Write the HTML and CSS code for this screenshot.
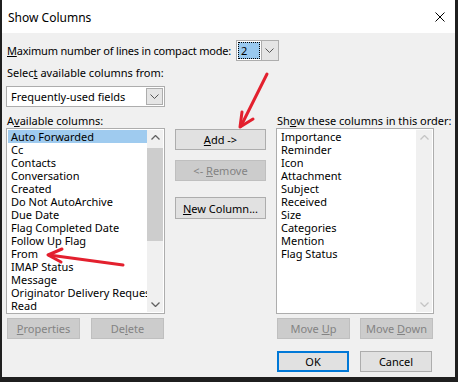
FILE: index.html
```html
<!DOCTYPE html>
<html lang="en">
<head>
  <meta charset="UTF-8">
  <title>Show Columns</title>
  <link rel="stylesheet" href="styles.css">
</head>
<body>
  <div class="dialog">
    <div class="titlebar">
      <span class="title">Show Columns</span>
      <svg class="close" width="10" height="10" viewBox="0 0 10 10">
        <path d="M0.5 0.5 L9.5 9.5 M9.5 0.5 L0.5 9.5" stroke="#000" stroke-width="1"/>
      </svg>
    </div>

    <div class="content">
      <div class="lines-row">
        <span class="tight"><u>M</u>aximum number of lines in compact mode:</span>
        <div class="small-combo">
          <span class="small-value">2</span>
          <span class="drop"><svg width="9" height="5" viewBox="0 0 9 5"><path d="M0.5 0.5 L4.5 4.5 L8.5 0.5" fill="none" stroke="#555"/></svg></span>
        </div>
      </div>

      <div class="label">Selec<u>t</u> available columns from:</div>
      <div class="combo">
        <span>Frequently-used fields</span>
        <span class="drop"><svg width="9" height="5" viewBox="0 0 9 5"><path d="M0.5 0.5 L4.5 4.5 L8.5 0.5" fill="none" stroke="#555"/></svg></span>
      </div>

      <div class="columns">
        <div class="label col-left">A<u>v</u>ailable columns:</div>
        <div class="label col-right">Sh<u>o</u>w these columns in this order:</div>

        <div class="listbox">
          <div class="items">
            <div class="item selected">Auto Forwarded</div>
            <div class="item">Cc</div>
            <div class="item">Contacts</div>
            <div class="item">Conversation</div>
            <div class="item">Created</div>
            <div class="item">Do Not AutoArchive</div>
            <div class="item">Due Date</div>
            <div class="item">Flag Completed Date</div>
            <div class="item">Follow Up Flag</div>
            <div class="item">From</div>
            <div class="item">IMAP Status</div>
            <div class="item">Message</div>
            <div class="item">Originator Delivery Requested</div>
            <div class="item">Read</div>
          </div>
          <div class="scrollbar">
            <svg class="arrow" width="9" height="5" viewBox="0 0 9 5"><path d="M0.5 4.5 L4.5 0.5 L8.5 4.5" fill="none" stroke="#606060" stroke-width="1.3"/></svg>
            <div class="track"><div class="thumb"></div></div>
            <svg class="arrow" width="9" height="5" viewBox="0 0 9 5"><path d="M0.5 0.5 L4.5 4.5 L8.5 0.5" fill="none" stroke="#606060" stroke-width="1.3"/></svg>
          </div>
        </div>

        <div class="middle">
          <button class="btn"><u>A</u>dd -&gt;</button>
          <button class="btn" disabled>&lt;- <u>R</u>emove</button>
          <button class="btn new-col"><u>N</u>ew Column...</button>
        </div>

        <div class="listbox">
          <div class="items">
            <div class="item">Importance</div>
            <div class="item">Reminder</div>
            <div class="item">Icon</div>
            <div class="item">Attachment</div>
            <div class="item">Subject</div>
            <div class="item">Received</div>
            <div class="item">Size</div>
            <div class="item">Categories</div>
            <div class="item">Mention</div>
            <div class="item">Flag Status</div>
          </div>
          <div class="scrollbar">
            <svg class="arrow" width="9" height="5" viewBox="0 0 9 5"><path d="M0.5 4.5 L4.5 0.5 L8.5 4.5" fill="none" stroke="#c4c4c4" stroke-width="1.3"/></svg>
            <div class="track"></div>
            <svg class="arrow" width="9" height="5" viewBox="0 0 9 5"><path d="M0.5 0.5 L4.5 4.5 L8.5 0.5" fill="none" stroke="#c4c4c4" stroke-width="1.3"/></svg>
          </div>
        </div>

        <div class="pair col-left">
          <button class="btn" disabled><u>P</u>roperties</button>
          <button class="btn" disabled>De<u>l</u>ete</button>
        </div>
        <div class="pair col-right">
          <button class="btn" disabled>Move <u>U</u>p</button>
          <button class="btn" disabled>Move <u>D</u>own</button>
        </div>

        <div class="pair col-right footer">
          <button class="btn default">OK</button>
          <button class="btn">Cancel</button>
        </div>
      </div>
    </div>
  </div>

  <!-- red annotation arrows -->
  <svg class="annotations" width="458" height="382" viewBox="0 0 458 382">
    <g fill="none" stroke="#e3202e" stroke-width="3" stroke-linecap="round" stroke-linejoin="round">
      <path d="M267 74 L241 126"/>
      <path d="M242 112 L240 127 L253 119"/>
      <path d="M123 265 L49 255"/>
      <path d="M62 249 L48 255 L61 262"/>
    </g>
  </svg>
</body>
</html>
```

FILE: styles.css
```css
body {
  margin: 0;
  padding: 0 3px 5px 2px;
  background: #1f1f1f;
  font-family: 'Noto Sans', 'Open Sans', sans-serif;
  font-size: 11px;
  color: #000;
  overflow: hidden;
  position: relative;
}
u {
  text-decoration: underline;
  text-underline-offset: 1px;
}
.dialog {
  height: 377px;
  background: #f0f0f0;
  display: flex;
  flex-direction: column;
}
.titlebar {
  height: 33px;
  background: #fff;
  display: flex;
  align-items: center;
  justify-content: space-between;
  padding: 1px 10px 0 6px;
  box-sizing: border-box;
  flex-shrink: 0;
}
.title {
  font-size: 12px;
}
.content {
  padding: 7px 0 0 4px;
}
.lines-row {
  display: flex;
  align-items: center;
  gap: 5px;
  height: 21px;
  padding-left: 1px;
}
.tight {
  letter-spacing: -0.2px;
}
.small-combo {
  display: flex;
  width: 41px;
  height: 19px;
  border: 1px solid #adadad;
  background: #fff;
}
.small-value {
  width: 22px;
  margin: 1px;
  background: #99c9ef;
  border: 1px dotted #000;
  line-height: 15px;
  padding-left: 2px;
  box-sizing: border-box;
}
.drop {
  display: flex;
  align-items: center;
  justify-content: center;
  width: 17px;
  background: #e5e5e5;
  border-left: 1px solid #adadad;
  margin-left: auto;
}
.label {
  height: 15px;
  line-height: 15px;
  padding-left: 1px;
  white-space: nowrap;
}
.lines-row + .label {
  margin-top: 4px;
}
.combo {
  display: flex;
  align-items: center;
  width: 153px;
  height: 19px;
  margin: 6px 0 6px;
  border: 1px solid #adadad;
  background: #fff;
  padding-left: 4px;
}
.combo .drop {
  height: 15px;
  margin-right: 1px;
  border: 1px solid #adadad;
  width: 15px;
}
.columns {
  display: grid;
  grid-template-columns: 159px 91px 158px;
  grid-template-rows: 15px 186px 25px 33px;
  column-gap: 10px;
}
.col-left {
  grid-column: 1;
}
.col-right {
  grid-column: 3;
}
.listbox {
  border: 1px solid #adadad;
  background: #fff;
  display: flex;
  padding: 1px;
  height: 182px;
}
.items {
  flex: 1;
  overflow: hidden;
  min-width: 0;
}
.item {
  height: 13px;
  line-height: 13px;
  padding-left: 3px;
  white-space: nowrap;
}
.item.selected {
  background: #9fcbef;
}
.scrollbar {
  width: 16px;
  display: flex;
  flex-direction: column;
  align-items: center;
  background: #f0f0f0;
}
.scrollbar .arrow {
  margin: 5px 0;
}
.track {
  flex: 1;
  width: 100%;
}
.thumb {
  height: 93px;
  margin-top: 3px;
  background: #cdcdcd;
}
.middle {
  display: flex;
  flex-direction: column;
  gap: 10px;
  padding-top: 1px;
}
.btn {
  font-family: inherit;
  font-size: 11px;
  height: 21px;
  background: #e1e1e1;
  border: 1px solid #adadad;
  color: #000;
  padding: 0;
  line-height: 17px;
}
.btn:disabled {
  background: #cccccc;
  border-color: #bfbfbf;
  color: #838383;
}
.middle .new-col {
  margin-top: 6px;
  height: 22px;
}
.pair {
  display: flex;
  justify-content: space-between;
  align-items: flex-end;
  padding: 0 1px;
}
.pair .btn {
  width: 73px;
}
.footer {
  align-items: flex-end;
  padding-right: 2px;
}
.footer .btn {
  width: 72px;
}
.footer .default {
  border: 2px solid #0078d7;
}
.annotations {
  position: absolute;
  top: 0;
  left: 0;
  pointer-events: none;
}
```
